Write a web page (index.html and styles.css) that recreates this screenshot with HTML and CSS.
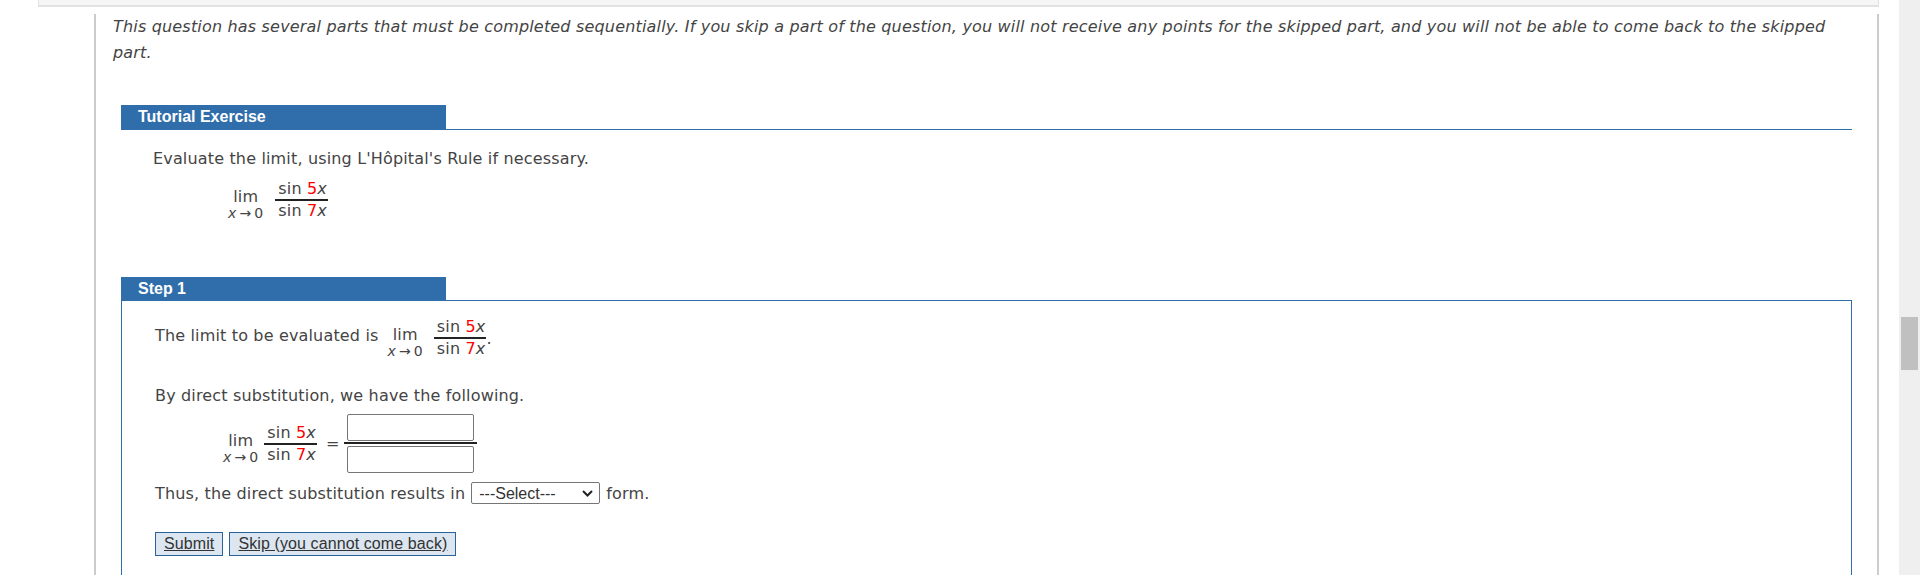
FILE: index.html
```html
<!DOCTYPE html>
<html lang="en">
<head>
<meta charset="utf-8">
<title>Tutorial Exercise</title>
<link rel="stylesheet" href="styles.css">
</head>
<body>
<div class="page">
  <main class="main">
    <div class="topband"></div>
    <div class="content">
      <p class="intro">This question has several parts that must be completed sequentially. If you skip a part of the question, you will not receive any points for the skipped part, and you will not be able to come back to the skipped part.</p>

      <section class="tutorial">
        <h2 class="bar">Tutorial Exercise</h2>
        <div class="tutorial-body">
          <p class="line">Evaluate the limit, using L'Hôpital's Rule if necessary.</p>
          <div class="math math-display">
            <span class="limit"><span class="lim">lim</span><span class="sub"><i>x</i>&#8201;→&#8201;0</span></span>
            <span class="frac"><span class="num">sin <b class="red">5</b><i>x</i></span><span class="den">sin <b class="red">7</b><i>x</i></span></span>
          </div>
        </div>
      </section>

      <section class="step">
        <h2 class="bar">Step 1</h2>
        <div class="step-body">
          <div class="line-math"><span>The limit to be evaluated is</span>
            <span class="math">
              <span class="limit"><span class="lim">lim</span><span class="sub"><i>x</i>&#8201;→&#8201;0</span></span>
              <span class="frac"><span class="num">sin <b class="red">5</b><i>x</i></span><span class="den">sin <b class="red">7</b><i>x</i></span></span>
            </span><span class="dot">.</span>
          </div>
          <p class="line by">By direct substitution, we have the following.</p>
          <div class="math math-answer">
            <span class="limit"><span class="lim">lim</span><span class="sub"><i>x</i>&#8201;→&#8201;0</span></span>
            <span class="frac tight"><span class="num">sin <b class="red">5</b><i>x</i></span><span class="den">sin <b class="red">7</b><i>x</i></span></span>
            <span class="eq">=</span>
            <span class="frac inputs"><span class="num"><input class="box" type="text" aria-label="numerator"></span><span class="den"><input class="box" type="text" aria-label="denominator"></span></span>
          </div>
          <div class="line-form"><span>Thus, the direct substitution results in</span>
            <select class="pick" aria-label="form"><option>---Select---</option></select>
            <span>form.</span>
          </div>
          <div class="actions">
            <button class="btn" type="button">Submit</button>
            <button class="btn" type="button">Skip (you cannot come back)</button>
          </div>
        </div>
      </section>
    </div>
  </main>
  <div class="track"><div class="thumb"></div></div>
</div>
</body>
</html>
```
FILE: styles.css
```css
* { box-sizing: border-box; }
html, body { margin: 0; height: 100%; overflow: hidden; background: #fff; }
body { font-family: "DejaVu Sans", Verdana, sans-serif; font-size: 16px; letter-spacing: .16px; color: #444; }
.page { display: flex; height: 575px; overflow: hidden; }
.main { flex: 1; min-width: 0; padding-left: 38px; padding-right: 20px; }
.topband { height: 7px; background: #f6f6f6; border-style: solid; border-color: #e2e2e2; border-width: 0 1px 2px 1px; }
.content { margin-left: 56px; height: 580px; border-left: 2px solid #ccc; border-right: 2px solid #ccc; padding: 0 25px 0 17px; }
.intro { margin: 7px 0 0; font-style: italic; line-height: 26px; letter-spacing: .18px; width: 1730px; }
.bar { margin: 0; width: 325px; height: 25px; background: #2f6eab; color: #fff; font: bold 16px/24px "Liberation Sans", Arial, sans-serif; letter-spacing: 0; padding-left: 17px; }
.tutorial { margin-top: 39px; margin-left: 8px; }
.tutorial-body { border-top: 1px solid #2f6eab; margin-top: -1px; padding: 17px 0 0 32px; height: 148px; }
.line { margin: 0; line-height: 24px; }
.math { display: inline-flex; align-items: center; }
.math-display { display: flex; margin: 8px 0 0 75px; }
.limit { display: inline-flex; flex-direction: column; align-items: center; margin-right: 12px; line-height: 19px; }
.lim { margin-top: 7px; }
.sub { font-size: 14px; line-height: 14px; white-space: nowrap; }
.frac { display: inline-flex; flex-direction: column; align-items: stretch; text-align: center; }
.num { border-bottom: 2px solid #222; line-height: 20px; padding: 0 1px 0 3px; }
.den { line-height: 19px; padding: 0 1px 0 3px; }
.red { color: #f00; font-weight: normal; }
.step { margin-left: 8px; }
.step .bar { height: 24px; line-height: 23px; }
.step-body { border: 1px solid #2f6eab; border-bottom: 0; margin-top: -1px; padding: 11px 0 0 33px; height: 300px; }
.line-math { display: flex; align-items: center; }
.line-math .math { margin: 5px 0 0 9px; }
.line-math .limit { margin-right: 11px; }
.dot { margin: 6px 0 0 0; }
.by { margin-top: 26px; }
.math-answer { display: flex; margin: 6px 0 0 68px; }
.math-answer .limit { margin-right: 6px; }
.eq { margin: 0 4px 0 9px; }
.inputs .num { padding: 0 3px 1px; line-height: 0; }
.inputs .den { padding: 2px 3px 0; line-height: 0; }
.box { display: block; width: 127px; height: 27px; border: 1px solid #767676; border-radius: 2px; padding: 0; background: #fff; }
.line-form { display: flex; align-items: center; margin-top: 9px; }
.pick { appearance: none; width: 129px; height: 22px; margin: 0 6px; padding: 0 0 0 7px; font: 16px "Liberation Sans", Arial, sans-serif; color: #333; border: 1px solid #767676; border-radius: 2px; background: #fff url("data:image/svg+xml,%3Csvg xmlns='http://www.w3.org/2000/svg' width='11' height='7' viewBox='0 0 11 7'%3E%3Cpath d='M1 1l4.5 4.5L10 1' fill='none' stroke='%23222' stroke-width='2'/%3E%3C/svg%3E") no-repeat right 6px center; }
.actions { display: flex; gap: 6px; margin-top: 28px; }
.btn { height: 24px; padding: 0 8px; background: #dbe6f0; border: 1px solid #2a6399; color: #333; font: 16px/20px "Liberation Sans", Arial, sans-serif; letter-spacing: .1px; text-decoration: underline; }
.track { flex: 0 0 21px; background: #efefef; padding: 317px 2px 0; }
.thumb { height: 53px; background: #c0c0c0; }
```
